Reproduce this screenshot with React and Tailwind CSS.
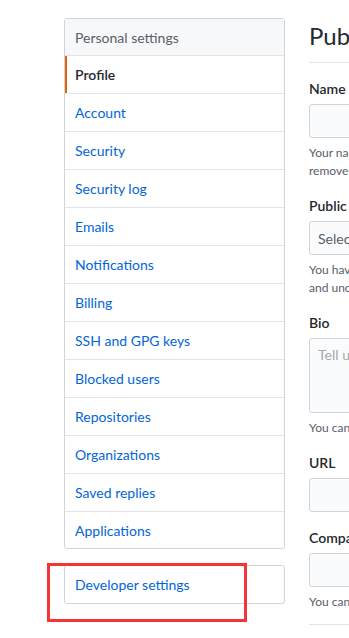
import { useState } from 'react';

const items = [
  'Profile',
  'Account',
  'Security',
  'Security log',
  'Emails',
  'Notifications',
  'Billing',
  'SSH and GPG keys',
  'Blocked users',
  'Repositories',
  'Organizations',
  'Saved replies',
  'Applications',
];

function Field({ label, children, help }) {
  return (
    <div className="mt-[15px] first:mt-4">
      <div className="text-[14px] leading-[21px] font-semibold text-[#24292e]">{label}</div>
      <div className="mt-[5px]">{children}</div>
      {help && (
        <div className="mt-[6px] text-[12px] leading-[18px] text-[#586069] whitespace-nowrap">
          {help.map((line) => (
            <div key={line}>{line}</div>
          ))}
        </div>
      )}
    </div>
  );
}

export default function App() {
  const [active] = useState('Profile');

  return (
    <div
      className="relative w-[349px] h-[638px] overflow-hidden bg-white"
      style={{ fontFamily: 'Lato, "Liberation Sans", sans-serif' }}
    >
      <div className="flex pl-16 pt-[18px]">
        {/* sidebar */}
        <div className="w-[221px] shrink-0">
          <nav className="border border-[#d1d5da] rounded-[3px] overflow-hidden">
            <div className="h-[37px] flex items-center px-[10px] bg-[#f6f8fa] border-b border-[#e1e4e8] text-[14px] text-[#586069]">
              Personal settings
            </div>
            {items.map((item, i) => (
              <a
                key={item}
                href="#"
                className={
                  'flex items-center px-[10px] text-[14px] ' +
                  (i < items.length - 1 ? 'h-[38px] border-b border-[#e1e4e8] ' : 'h-[36px] ') +
                  (item === active
                    ? 'text-[#24292e] font-semibold shadow-[inset_2px_0_0_#e36209]'
                    : 'text-[#0366d6]')
                }
              >
                {item}
              </a>
            ))}
          </nav>
          <div className="mt-[16px] border border-[#d1d5da] rounded-[3px]">
            <a href="#" className="h-[37px] flex items-center px-[10px] text-[14px] text-[#0366d6]">
              Developer settings
            </a>
          </div>
        </div>

        {/* main */}
        <div className="ml-6 w-[440px] shrink-0">
          <h2 className="text-[24px] leading-[36px] font-normal text-[#24292e] pb-2 border-b border-[#e1e4e8]">
            Public profile
          </h2>
          <Field
            label="Name"
            help={['Your name may appear around GitHub where you contribute or are mentioned. You can', 'remove it at any time.']}
          >
            <input className="w-[440px] h-[34px] bg-[#fafbfc] border border-[#d1d5da] rounded-[3px] px-2 text-[14px]" />
          </Field>
          <Field
            label="Public email"
            help={['You have set your email address to private. To toggle email privacy, go to email settings', 'and uncheck "Keep my email address private."']}
          >
            <div className="w-[440px] h-[34px] bg-[#fafbfc] border border-[#d1d5da] rounded-[3px] px-2 flex items-center text-[14px] text-[#586069]">
              Select a verified email to display
            </div>
          </Field>
          <Field label="Bio" help={['You can @mention other users and organizations to link to them.']}>
            <div className="w-[440px] h-[75px] bg-[#fafbfc] border border-[#d1d5da] rounded-[3px] px-2 pt-[5px] text-[14px] text-[#a3aab1]">
              Tell us a little bit about yourself
            </div>
          </Field>
          <Field label="URL">
            <input className="w-[440px] h-[34px] bg-[#fafbfc] border border-[#d1d5da] rounded-[3px] px-2 text-[14px]" />
          </Field>
          <Field
            label="Company"
            help={["You can @mention your company's GitHub organization to link it."]}
          >
            <input className="w-[440px] h-[34px] bg-[#fafbfc] border border-[#d1d5da] rounded-[3px] px-2 text-[14px]" />
          </Field>
          <div className="mt-[13px] border-t border-[#e1e4e8]" />
        </div>
      </div>

      {/* highlight */}
      <div className="absolute left-[47px] top-[563px] w-[200px] h-[59px] border-[3px] border-[#f43535]" />
    </div>
  );
}
